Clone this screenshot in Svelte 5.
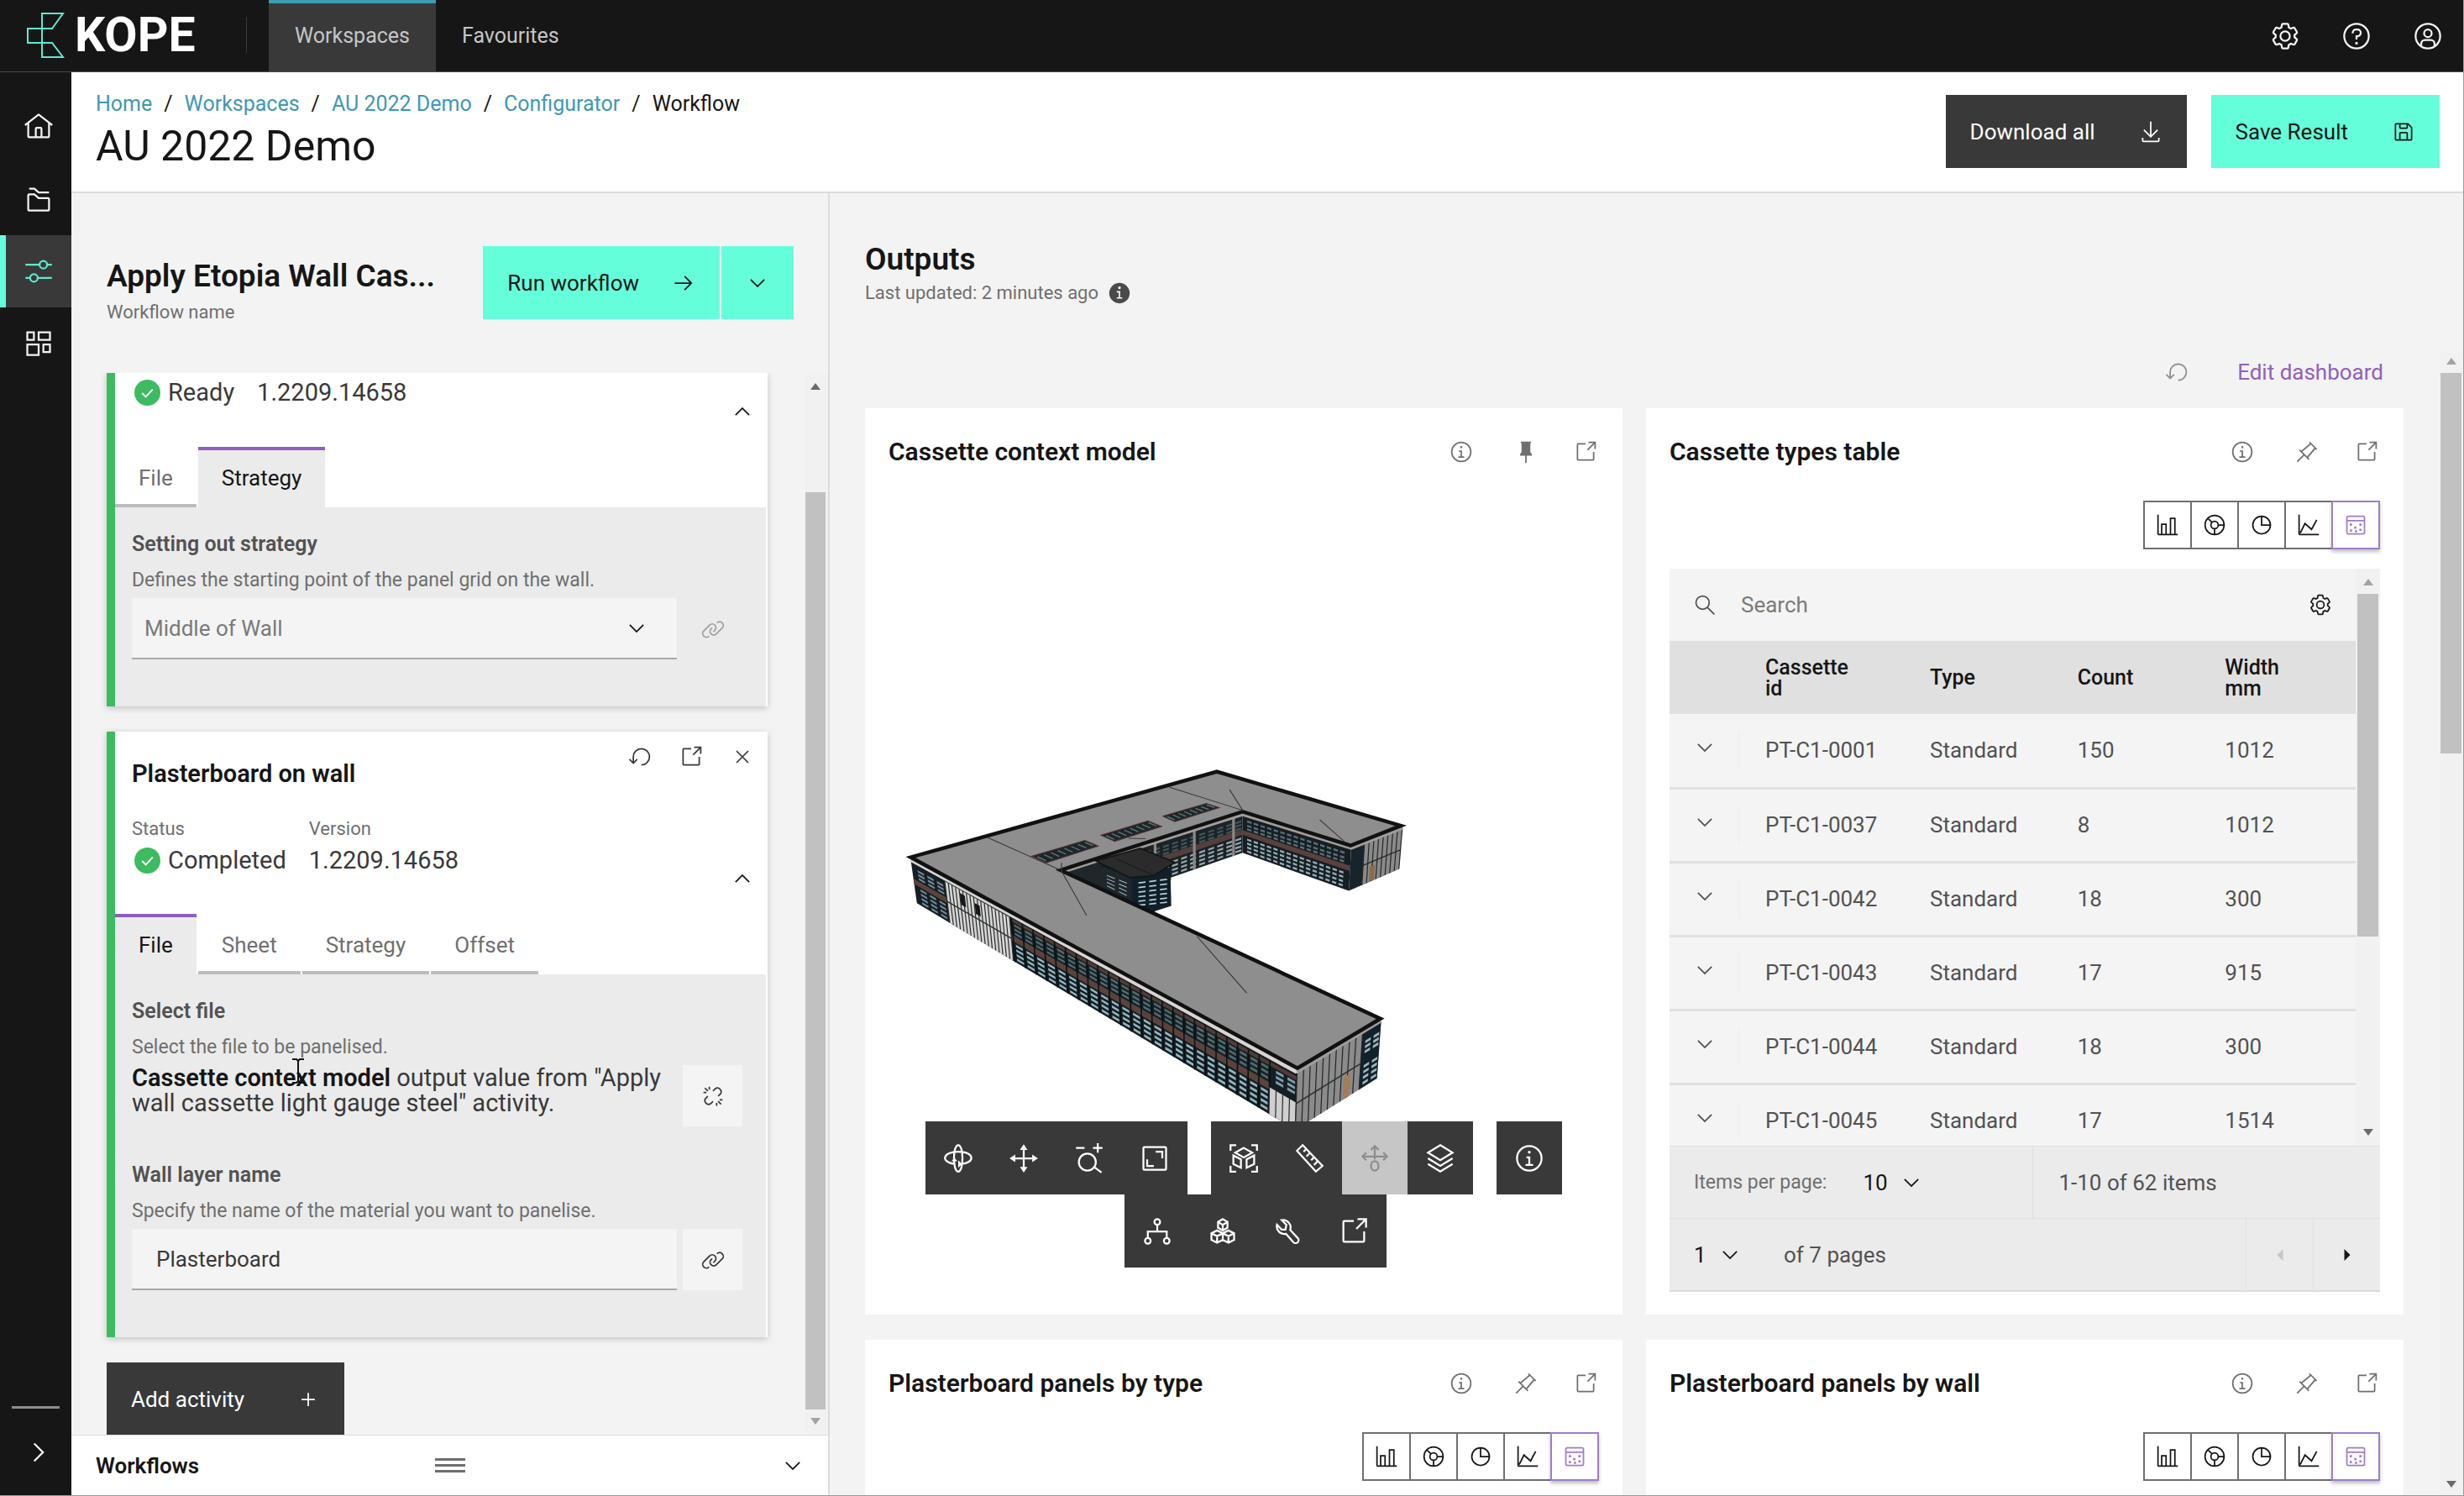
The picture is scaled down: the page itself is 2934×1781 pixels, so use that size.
<script lang="ts">
  type Point = [number, number];

  // 32x32 icon grid: f = filled shape, s = stroked outline
  const icons: Record<string, { f?: string; s?: string }> = {
    home: { f: "M16.6 2.2a1 1 0 0 0-1.2 0L1 13.4 2.2 15 4 13.6V26a2 2 0 0 0 2 2h20a2 2 0 0 0 2-2V13.6L29.8 15 31 13.4ZM18 26h-4v-8h4Zm2 0v-8a2 2 0 0 0-2-2h-4a2 2 0 0 0-2 2v8H6V12l10-7.7L26 12v14Z" },
    folders: { s: "M5 27V12q0-1 1-1h5.500l4.500 4H26q1 0 1 1v11q0 1-1 1H6q-1 0-1-1ZM6 5h5.500l4.500 4h11" },
    flow: { s: "M2 9h15M25 9h5M2 23h5M15 23h15M21 5a4 4 0 1 0 0 8a4 4 0 1 0 0-8M11 19a4 4 0 1 0 0 8a4 4 0 1 0 0-8" },
    board: { s: "M4 4h7v8H4ZM16 4h12v8H16ZM4 17h12v11H4ZM21 17h7v8h-7Z" },
    gear: { f: "M27,16.76c0-.25,0-.5,0-.76s0-.51,0-.77l1.92-1.68A2,2,0,0,0,29.3,11L26.94,7a2,2,0,0,0-1.73-1,2,2,0,0,0-.64.1l-2.43.82a11.35,11.35,0,0,0-1.31-.75l-.51-2.52a2,2,0,0,0-2-1.61H13.64a2,2,0,0,0-2,1.61l-.51,2.52a11.48,11.48,0,0,0-1.32.75L7.43,6.06A2,2,0,0,0,6.79,6,2,2,0,0,0,5.06,7L2.7,11a2,2,0,0,0,.41,2.51L5,15.24c0,.25,0,.5,0,.76s0,.51,0,.77L3.11,18.45A2,2,0,0,0,2.7,21L5.06,25a2,2,0,0,0,1.73,1,2,2,0,0,0,.64-.1l2.43-.82a11.35,11.35,0,0,0,1.31.75l.51,2.52a2,2,0,0,0,2,1.61h4.72a2,2,0,0,0,2-1.61l.51-2.52a11.48,11.48,0,0,0,1.32-.75l2.42.82a2,2,0,0,0,.64.1,2,2,0,0,0,1.73-1L29.3,21a2,2,0,0,0-.41-2.51ZM25.21,24l-3.43-1.16a8.86,8.86,0,0,1-2.71,1.57L18.36,28H13.64l-.71-3.55a9.36,9.36,0,0,1-2.7-1.57L6.79,24,4.43,20l2.72-2.4a8.9,8.9,0,0,1,0-3.13L4.43,12,6.79,8l3.43,1.16a8.86,8.86,0,0,1,2.71-1.57L13.64,4h4.72l.71,3.55a9.36,9.36,0,0,1,2.7,1.57L25.21,8,27.57,12l-2.72,2.4a8.9,8.9,0,0,1,0,3.13L27.57,20ZM16,22a6,6,0,1,1,6-6A5.94,5.94,0,0,1,16,22Zm0-10a3.91,3.91,0,0,0-4,4,3.91,3.91,0,0,0,4,4,3.91,3.91,0,0,0,4-4A3.91,3.91,0,0,0,16,12Z" },
    help: { s: "M16 3a13 13 0 1 0 0 26a13 13 0 1 0 0-26", f: "M17 8h-1.500A4.500 4.500 0 0 0 11 12.500V13h2v-.5a2.500 2.500 0 0 1 2.500-2.500H17a2.500 2.500 0 0 1 0 5h-2v4.500h2V17a4.500 4.500 0 0 0 0-9ZM16 22a1.500 1.500 0 1 0 0 3a1.500 1.500 0 1 0 0-3" },
    user: { s: "M16 3a13 13 0 1 0 0 26a13 13 0 1 0 0-26M16 9a4 4 0 1 0 0 8a4 4 0 1 0 0-8M9 26v-2a4 4 0 0 1 4-4h6a4 4 0 0 1 4 4v2" },
    download: { f: "M26 24v4H6v-4H4v4a2 2 0 0 0 2 2h20a2 2 0 0 0 2-2v-4ZM26 14l-1.400-1.400-7.600 7.600V2h-2v18.200l-7.600-7.600L6 14l10 10Z" },
    save: { f: "M27.700 9.300l-5-5A1 1 0 0 0 22 4H6a2 2 0 0 0-2 2v20a2 2 0 0 0 2 2h20a2 2 0 0 0 2-2V10a1 1 0 0 0-.3-.7ZM12 6h8v4h-8Zm8 20h-8v-8h8Zm2 0v-8a2 2 0 0 0-2-2h-8a2 2 0 0 0-2 2v8H6V6h4v4a2 2 0 0 0 2 2h8a2 2 0 0 0 2-2V6.400l4 4V26Z" },
    arrow: { f: "M18 6l-1.400 1.400 7.600 7.600H4v2h20.200l-7.600 7.600L18 26l10-10Z" },
    down: { f: "M16 22 6 12l1.400-1.400 8.600 8.600 8.600-8.600L26 12Z" },
    up: { f: "M16 10 6 20l1.400 1.400 8.600-8.600 8.600 8.600L26 20Z" },
    right: { f: "M22 16 12 26l-1.400-1.400 8.600-8.600-8.600-8.600L12 6Z" },
    reset: { f: "M18 28A12 12 0 1 0 6 16v6.200l-3.600-3.600L1 20l6 6 6-6-1.400-1.400L8 22.200V16a10 10 0 1 1 10 10Z" },
    launch: { f: "M26 28H6a2 2 0 0 1-2-2V6a2 2 0 0 1 2-2h10v2H6v20h20V16h2v10a2 2 0 0 1-2 2ZM20 2v2h6.600L18 12.600l1.400 1.400L28 5.400V12h2V2Z" },
    close: { s: "M8 8l16 16M24 8 8 24" },
    link: { f: "M29.25,6.76a6,6,0,0,0-8.5,0l1.42,1.42a4,4,0,1,1,5.67,5.67l-8,8a4,4,0,1,1-5.67-5.66l1.41-1.42-1.41-1.42-1.42,1.42a6,6,0,0,0,0,8.5A6,6,0,0,0,17,25a6,6,0,0,0,4.27-1.76l8-8A6,6,0,0,0,29.25,6.76ZM4.19,24.82a4,4,0,0,1,0-5.67l8-8a4,4,0,0,1,5.67,0A3.94,3.94,0,0,1,19,14a4,4,0,0,1-1.17,2.85L15.71,19l1.42,1.42,2.12-2.12a6,6,0,0,0-8.51-8.51l-8,8a6,6,0,0,0,0,8.51A6,6,0,0,0,7,28a6.07,6.07,0,0,0,4.28-1.76L9.86,24.82A4,4,0,0,1,4.19,24.82Z" },
    unlink: { s: "M16 9l3-3a5 5 0 0 1 7 7l-3 3M16 23l-3 3a5 5 0 0 1-7-7l3-3M11 3v4M3 11h4M5 5l4 4M21 29v-4M29 21h-4M27 27l-4-4" },
    plus: { s: "M16 7v18M7 16h18" },
    info: { s: "M16 3a13 13 0 1 0 0 26a13 13 0 1 0 0-26", f: "M17 22v-8h-4v2h2v6h-3v2h8v-2ZM16 8a1.500 1.500 0 1 0 0 3a1.500 1.500 0 1 0 0-3" },
    pin: { f: "M28.600 13.300 30 11.900 20 2l-1.300 1.400 1.200 1.200L8.400 14.300l-1.700-1.700L5.250 14l5.650 5.700L2 28.600 3.400 30l8.900-8.900 5.700 5.650 1.400-1.400-1.700-1.700 9.700-11.500ZM16.260 22.200 9.800 15.740 21.300 6 26 10.700Z" },
    pinned: { f: "M9 2h14v2h-1v12l2 3v2h-7v10h-2V21H8v-2l2-3V4H9Z" },
    bars: { f: "M27 28V6h-8v22h-4V14H7v14H4V2H2v26a2 2 0 0 0 2 2h26v-2ZM13 28H9V16h4Zm12 0h-4V8h4Z" },
    donut: { s: "M16 3a13 13 0 1 0 0 26a13 13 0 1 0 0-26M16 11a5 5 0 1 0 0 10a5 5 0 1 0 0-10M12.500 12.500 7 7M21 16h8M16 21v8" },
    pie: { s: "M16 4a12 12 0 1 0 0 24a12 12 0 1 0 0-24M16 4v12h12" },
    line: { s: "M3 2v26q0 1 1 1h26M4.500 27 11 14l9 8L27 9" },
    grid: { s: "M6 4h20q2 0 2 2v20q0 2-2 2H6q-2 0-2-2V6q0-2 2-2ZM4 10h24", f: "M8 14h3v3H8ZM21 14h3v3h-3ZM14 18h3v3h-3ZM8 22h3v3H8ZM15 23h3v3h-3ZM21 21h3v3h-3Z" },
    search: { s: "M13 4a9 9 0 1 0 0 18a9 9 0 1 0 0-18M19.500 19.500 29 29" },
    orbit: { s: "M16 2c6 0 6 28 0 28S10 2 16 2M16 9c18 0 18 12 3 13M13 22C-4 20 0 9 16 9", f: "M12 15l-3 4h6ZM20 22l-4-4v8Z" },
    pan: { s: "M16 4v24M4 16h24", f: "M16 1l4 6h-8ZM16 31l4-6h-8ZM1 16l6-4v8ZM31 16l-6-4v8Z" },
    zoom: { s: "M14 11a9 9 0 1 0 0 18a9 9 0 1 0 0-18M21 25l8 6M2 5h9M20 5h10M25 0v10" },
    fit: { s: "M5 4h22q1 0 1 1v22q0 1-1 1H5q-1 0-1-1V5q0-1 1-1ZM17 9h7v7M15 24H8v-7" },
    explode: { s: "M2 8V2h6M24 2h6v6M30 24v6h-6M8 30H2v-6M16 5l9 5-9 5-9-5ZM5 13l8 4v9l-8-4ZM27 13l-8 4v9l8-4Z" },
    ruler: { s: "M9 2 30 24l-7 6L3 8ZM13 6l-3 3M17 10l-4 4M21 15l-3 3M25 19l-4 4" },
    move: { s: "M16 3v14M3 14h26M12 7l4-4 4 4M7 10l-4 4 4 4M25 10l4 4-4 4M16 19a4 5 0 1 0 0 10a4 5 0 1 0 0-10" },
    layers: { s: "M16 2l13 8-13 8L3 10ZM3 16l13 8 13-8M3 22l13 8 13-8" },
    tree: { s: "M16 3a3 3 0 1 0 0 6a3 3 0 1 0 0-6M16 9v7M6 23v-7h20v7M6 23a3 3 0 1 0 0 6a3 3 0 1 0 0-6M26 23a3 3 0 1 0 0 6a3 3 0 1 0 0-6" },
    blocks: { s: "M16 3l5 3v6l-5 3-5-3V6ZM11 6l5 3 5-3M16 9v6M10 15l6 3v7l-6 3-6-3v-7ZM4 18l6 3 6-3M10 21v7M22 15l6 3v7l-6 3-6-3v-7ZM16 18l6 3 6-3M22 21v7" },
    wrench: { s: "M9 4l5 5-1 5H9L4 9a8 8 0 0 0 9.500 9.500l8 9a3 3 0 0 0 4.500-4.500l-8-8.500A8 8 0 0 0 9 4Z" },
    caretLeft: { f: "M20 8v16l-8-8Z" },
    caretRight: { f: "M12 8v16l8-8Z" },
  };

  const crumbs = ["Home", "Workspaces", "AU 2022 Demo", "Configurator"];
  const sideItems = [
    { icon: "home", label: "Home" },
    { icon: "folders", label: "Projects" },
    { icon: "flow", label: "Configurator", active: true },
    { icon: "board", label: "Dashboards" },
  ];
  const rows = [
    ["PT-C1-0001", "Standard", "150", "1012"],
    ["PT-C1-0037", "Standard", "8", "1012"],
    ["PT-C1-0042", "Standard", "18", "300"],
    ["PT-C1-0043", "Standard", "17", "915"],
    ["PT-C1-0044", "Standard", "18", "300"],
    ["PT-C1-0045", "Standard", "17", "1514"],
  ];
  const charts = ["bars", "donut", "pie", "line", "grid"];
  const tools = [
    ["orbit", "pan", "zoom", "fit"],
    ["explode", "ruler", "move", "layers"],
    ["info"],
    ["tree", "blocks", "wrench", "launch"],
  ];

  let layerName = $state("Plasterboard");
  let search = $state("");
  let chart = $state("grid");

  // walls are quads: top-left, top-right, bottom-right, bottom-left
  function at(q: Point[], u: number, v: number): Point {
    const mix = (a: Point, b: Point, t: number): Point => [a[0] + (b[0] - a[0]) * t, a[1] + (b[1] - a[1]) * t];
    return mix(mix(q[0], q[1], u), mix(q[3], q[2], u), v);
  }
  function cell(q: Point[], u0: number, v0: number, u1: number, v1: number) {
    const pts = [at(q, u0, v0), at(q, u1, v0), at(q, u1, v1), at(q, u0, v1)];
    return "M" + pts.map((p) => p.map((n) => n.toFixed(1)).join(" ")).join("L") + "Z";
  }
  function panes(q: Point[], cols: number, from: number, to: number, levels: number[]) {
    let d = "";
    const w = (to - from) / cols;
    for (let c = 0; c < cols; c++) {
      for (const v of levels) d += cell(q, from + w * (c + 0.2), v, from + w * (c + 0.86), v + 0.05);
    }
    return d;
  }
  function ribs(q: Point[], count: number, from: number, to: number, v0 = 0, v1 = 1) {
    let d = "";
    for (let i = 0; i <= count; i++) {
      const u = from + ((to - from) * i) / count;
      d += "M" + at(q, u, v0).join(" ") + "L" + at(q, u, v1).join(" ");
    }
    return d;
  }

  const front: Point[] = [[60, 402], [1187, 1164], [1182, 1366], [78, 556]];
  const end: Point[] = [[1187, 1164], [1432, 982], [1420, 1182], [1182, 1366]];
  const farEnd: Point[] = [[1345, 358], [1494, 286], [1484, 434], [1338, 512]];
  const innerRight: Point[] = [[1028, 236], [1345, 358], [1338, 512], [1028, 376]];
  const innerBack: Point[] = [[500, 445], [1028, 236], [1028, 376], [500, 600]];
  const upper = [0.16, 0.25, 0.34];
  const lower = [0.6, 0.7, 0.8, 0.9];
  const skylights: Point[][] = [
    [[413, 388], [568, 332], [607, 352], [455, 412]],
    [[615, 313], [752, 262], [792, 282], [655, 335]],
    [[795, 245], [922, 200], [960, 215], [830, 265]],
  ];
</script>

{#snippet icon(name: string, size = "md")}
  <svg class="icon {size}" viewBox="0 0 32 32" aria-hidden="true">
    {#if icons[name].s}<path class="stroke" d={icons[name].s} />{/if}
    {#if icons[name].f}<path class="fill" d={icons[name].f} />{/if}
  </svg>
{/snippet}

{#snippet check()}
  <svg class="check" viewBox="0 0 32 32" aria-hidden="true">
    <circle cx="16" cy="16" r="16" fill="#3dbb61" />
    <path d="M9.500 16.500l4.500 4.500 8.500-9" fill="none" stroke="#fff" stroke-width="2" />
  </svg>
{/snippet}

{#snippet scrollbar(kind: string)}
  <div class="scrollbar {kind}" aria-hidden="true">
    <i class="tri-up"></i>
    <span class="track"><b></b></span>
    <i class="tri-down"></i>
  </div>
{/snippet}

{#snippet tileHead(title: string, pinIcon: string)}
  <header class="tile-head">
    <h3>{title}</h3>
    <button type="button" aria-label="Information">{@render icon("info")}</button>
    <button type="button" aria-label="Pin">{@render icon(pinIcon)}</button>
    <button type="button" aria-label="Open in new window">{@render icon("launch")}</button>
  </header>
{/snippet}

{#snippet chartSwitch()}
  <div class="switch">
    {#each charts as name}
      <button type="button" class:on={chart === name} aria-label={name} onclick={() => (chart = name)}>
        {@render icon(name)}
      </button>
    {/each}
  </div>
{/snippet}

<div class="shell">
  <header class="topbar">
    <a class="brand" href="#home">
      <svg viewBox="0 0 46 56" aria-hidden="true">
        <path d="M19 2h25L31 20H2v17h29l13 17H19Z" />
      </svg>
      <span>KOPE</span>
    </a>
    <nav>
      <a class="current" href="#workspaces">Workspaces</a>
      <a href="#favourites">Favourites</a>
    </nav>
    <div class="account">
      <button type="button" aria-label="Settings">{@render icon("gear", "lg")}</button>
      <button type="button" aria-label="Help">{@render icon("help", "lg")}</button>
      <button type="button" aria-label="Account">{@render icon("user", "lg")}</button>
    </div>
  </header>

  <div class="body">
    <aside class="side">
      {#each sideItems as item}
        <a href="#{item.icon}" class:active={item.active} aria-label={item.label}>{@render icon(item.icon, "lg")}</a>
      {/each}
      <button type="button" class="expand" aria-label="Expand menu">{@render icon("right", "lg")}</button>
    </aside>

    <main>
      <header class="page-head">
        <div>
          <nav class="crumbs">
            {#each crumbs as crumb}
              <a href="#{crumb}">{crumb}</a><span>/</span>
            {/each}
            <span>Workflow</span>
          </nav>
          <h1>AU 2022 Demo</h1>
        </div>
        <div class="actions">
          <button type="button" class="btn dark">Download all {@render icon("download")}</button>
          <button type="button" class="btn teal">Save Result {@render icon("save")}</button>
        </div>
      </header>

      <div class="columns">
        <section class="workflow">
          <div class="workflow-head">
            <div class="name">
              <h2>Apply Etopia Wall Cas...</h2>
              <p class="helper small">Workflow name</p>
            </div>
            <div class="run">
              <button type="button" class="btn teal">Run workflow {@render icon("arrow")}</button>
              <button type="button" class="btn teal more" aria-label="More run options">{@render icon("down")}</button>
            </div>
          </div>

          <div class="scroll">
            <div class="activities">
              <article class="activity">
                <div class="summary short">
                  <div class="value">{@render check()} Ready</div>
                  <div class="value">1.2209.14658</div>
                  <button type="button" class="fold" aria-label="Collapse">{@render icon("up")}</button>
                </div>
                <div class="tabs">
                  <button type="button">File</button>
                  <button type="button" class="on">Strategy</button>
                </div>
                <div class="fields">
                  <div class="field">
                    <label for="strategy">Setting out strategy</label>
                    <p class="helper">Defines the starting point of the panel grid on the wall.</p>
                    <div class="control">
                      <div class="select">
                        <select id="strategy" disabled><option>Middle of Wall</option></select>
                        {@render icon("down")}
                      </div>
                      <button type="button" class="link off" disabled aria-label="Link value">{@render icon("link")}</button>
                    </div>
                  </div>
                </div>
              </article>

              <article class="activity">
                <div class="activity-head">
                  <h3>Plasterboard on wall</h3>
                  <div class="activity-tools">
                    <button type="button" aria-label="Reset">{@render icon("reset")}</button>
                    <button type="button" aria-label="Open">{@render icon("launch")}</button>
                    <button type="button" aria-label="Remove">{@render icon("close")}</button>
                  </div>
                </div>
                <div class="summary">
                  <div>
                    <p class="helper small">Status</p>
                    <div class="value">{@render check()} Completed</div>
                  </div>
                  <div>
                    <p class="helper small">Version</p>
                    <div class="value">1.2209.14658</div>
                  </div>
                  <button type="button" class="fold" aria-label="Collapse">{@render icon("up")}</button>
                </div>
                <div class="tabs">
                  <button type="button" class="on">File</button>
                  <button type="button">Sheet</button>
                  <button type="button">Strategy</button>
                  <button type="button">Offset</button>
                </div>
                <div class="fields">
                  <div class="field">
                    <h4>Select file</h4>
                    <p class="helper">Select the file to be panelised.</p>
                    <div class="control">
                      <p class="source">
                        <strong>Cassette context model</strong> output value from "Apply wall cassette light gauge steel" activity.
                        <svg class="caret" viewBox="0 0 20 30" aria-hidden="true"><path d="M3 1h5l2 2 2-2h5M10 3v24M3 29h5l2-2 2 2h5" /></svg>
                      </p>
                      <button type="button" class="link" aria-label="Unlink value">{@render icon("unlink")}</button>
                    </div>
                  </div>
                  <div class="field">
                    <label for="layer">Wall layer name</label>
                    <p class="helper">Specify the name of the material you want to panelise.</p>
                    <div class="control">
                      <input id="layer" type="text" bind:value={layerName} />
                      <button type="button" class="link" aria-label="Link value">{@render icon("link")}</button>
                    </div>
                  </div>
                </div>
              </article>

              <button type="button" class="btn dark add">Add activity {@render icon("plus")}</button>
            </div>
            {@render scrollbar("left")}
          </div>

          <footer class="drawer">
            <h3>Workflows</h3>
            <span class="grip"></span>
            <button type="button" aria-label="Toggle workflows">{@render icon("down")}</button>
          </footer>
        </section>

        <section class="outputs">
          <div class="outputs-head">
            <h2>Outputs</h2>
            <p class="helper small">
              Last updated: 2 minutes ago
              <svg class="dot" viewBox="0 0 32 32" aria-hidden="true">
                <circle cx="16" cy="16" r="15" />
                <path d="M17 22v-9h-5v2h3v7h-3v2h8v-2ZM16 6a2 2 0 1 0 0 4a2 2 0 1 0 0-4" />
              </svg>
            </p>
          </div>

          <div class="scroll">
            <div class="dashboard">
              <div class="edit">
                <button type="button" aria-label="Refresh">{@render icon("reset")}</button>
                <a href="#edit">Edit dashboard</a>
              </div>

              <article class="tile">
                {@render tileHead("Cassette context model", "pinned")}
                <div class="viewer">
                  <svg class="model" viewBox="0 0 1568 1336" preserveAspectRatio="none" role="img" aria-label="Cassette context model">
                    <path d={cell(innerBack, 0, 0, 1, 1)} fill="#1c2226" />
                    <path d={cell(innerBack, 0.3, 0.4, 1, 0.54)} fill="#53403a" />
                    <path d={panes(innerBack, 18, 0.1, 1, upper)} fill="#3f5559" />
                    <path d={panes(innerBack, 18, 0.1, 1, lower)} fill="#93a8ae" />
                    <path d={ribs(innerBack, 3, 0.3, 0.95)} stroke="#8d8685" stroke-width="8" />
                    <path d={cell(innerRight, 0, 0, 1, 1)} fill="#171e23" />
                    <path d={cell(innerRight, 0, 0.42, 1, 0.54)} fill="#5a423b" />
                    <path d={panes(innerRight, 15, 0.03, 0.95, [0.14, 0.25, 0.34])} fill="#587277" />
                    <path d={panes(innerRight, 15, 0.03, 0.95, lower)} fill="#93adb4" />
                    <path d={cell(farEnd, 0, 0, 1, 1)} fill="#17242b" />
                    <path d={cell(farEnd, 0.26, 0, 1, 1)} fill="#8a8a8a" />
                    <path d={ribs(farEnd, 8, 0.26, 1)} stroke="#26282a" stroke-width="3" />
                    <path d={cell(farEnd, 0.26, 0.52, 1, 0.55)} fill="#26282a" />
                    <path d={cell(farEnd, 0.4, 0.64, 0.5, 1)} fill="#8b6b4d" />
                    <path d="M500 440 770 590 820 470 740 360Z" fill="#20272b" />
                    <path d="M608 420 705 465 705 550 768 586 820 566 817 430Z" fill="#10202a" />
                    <path d={panes([[625, 440], [695, 470], [695, 545], [625, 500]], 2, 0, 1, [0.2, 0.4, 0.6, 0.8])} fill="#9fb8c2" />
                    <path d={panes([[718, 470], [812, 455], [812, 560], [718, 572]], 3, 0, 1, [0.12, 0.28, 0.44, 0.6, 0.76, 0.9])} fill="#b9cdd5" />

                    <path d={cell(front, 0, 0, 1, 1)} fill="#141e24" />
                    <path d={cell(front, 0.26, 0.06, 1, 0.13)} fill="#523c36" />
                    <path d={cell(front, 0, 0.43, 0.93, 0.56)} fill="#5b433b" />
                    <path d={panes(front, 3, 0.01, 0.085, [...upper, ...lower])} fill="#6f8b96" />
                    <path d={panes(front, 24, 0.26, 0.93, upper)} fill="#4f6b6d" />
                    <path d={panes(front, 24, 0.26, 0.93, lower)} fill="#93b5bf" />
                    <path d={panes(front, 2, 0.94, 1, upper)} fill="#7f9ba5" />
                    <path d={ribs(front, 24, 0.26, 0.93)} stroke="#0d1114" stroke-width="4" />
                    <path d={cell(front, 0.087, 0.06, 0.255, 1)} fill="#d5d5d3" />
                    <path d={ribs(front, 18, 0.087, 0.255, 0.06)} stroke="#2a2c2e" stroke-width="3" />
                    <path d={cell(front, 0.087, 0.5, 0.255, 0.53)} fill="#2f3234" />
                    <path d={cell(front, 0.125, 0.14, 0.138, 0.4) + cell(front, 0.163, 0.18, 0.176, 0.42)} fill="#15191c" />
                    <path d={cell(front, 0.93, 0.52, 1, 1)} fill="#cfcfcf" />
                    <path d={ribs(front, 4, 0.93, 1, 0.52)} stroke="#2a2c2e" stroke-width="3" />

                    <path d={cell(end, 0, 0, 1, 1)} fill="#8b8b8b" />
                    <path d={cell(end, 0.78, 0, 1, 1)} fill="#12222b" />
                    <path d={panes(end, 2, 0.8, 1, [...upper, ...lower])} fill="#9db6c0" />
                    <path d={ribs(end, 10, 0, 0.78)} stroke="#242628" stroke-width="3" />
                    <path d={cell(end, 0, 0.52, 0.78, 0.55)} fill="#303335" />
                    <path d={cell(end, 0.58, 0.6, 0.66, 1)} fill="#a37d58" />

                    <path d="M60 400 1187 1160" stroke="#d8d4d2" stroke-width="14" />
                    <path d="M1187 1160 1432 978M500 446 1028 240 1345 360 1494 288" fill="none" stroke="#a09d9b" stroke-width="10" />
                    <path
                      d="M953 86 1490 279 1343 350 1028 229 497 438 1430 969 1188 1146 60 392Z"
                      fill="#8e8e8e"
                      stroke="#111"
                      stroke-width="13"
                    />
                    <path d="M600 405 730 360 830 410 768 458 700 465Z" fill="#2b2b2b" stroke="#141414" stroke-width="5" />
                    <path d="M660 398 768 456" stroke="#111" stroke-width="2" />
                    <path d="M285 322 495 437M815 142 1028 224 990 150M1253 258l76 82M500 412v30l73 158M695 324l50 2M895 675l145 202" fill="none" stroke="#3a3a3a" stroke-width="3" />
                    {#each skylights as sky}
                      <path d={cell(sky, 0, 0, 1, 1)} fill="#1d2629" stroke="#5a2f35" stroke-width="3" />
                      <path d={ribs(sky, 7, 0.05, 0.95, 0.2, 0.8)} stroke="#5c777b" stroke-width="4" />
                    {/each}
                  </svg>
                  <div class="toolbar">
                    {#each tools as group}
                      <div class="group">
                        {#each group as tool}
                          <button type="button" aria-label={tool} disabled={tool === "move"}>{@render icon(tool, "lg")}</button>
                        {/each}
                      </div>
                    {/each}
                  </div>
                </div>
              </article>

              <article class="tile">
                {@render tileHead("Cassette types table", "pin")}
                {@render chartSwitch()}
                <div class="table-box">
                  <div class="table-view">
                    <div class="table-main">
                      <div class="search">
                        {@render icon("search")}
                        <input type="search" placeholder="Search" aria-label="Search" bind:value={search} />
                        <button type="button" aria-label="Table settings">{@render icon("gear")}</button>
                      </div>
                      <table>
                        <thead>
                          <tr>
                            <th class="tick" aria-label="Expand"></th>
                            <th class="id">Cassette<br />id</th>
                            <th>Type</th>
                            <th>Count</th>
                            <th>Width<br />mm</th>
                          </tr>
                        </thead>
                        <tbody>
                          {#each rows as row}
                            <tr>
                              <td class="tick"><button type="button" aria-label="Expand row">{@render icon("down")}</button></td>
                              {#each row as value}<td>{value}</td>{/each}
                            </tr>
                          {/each}
                        </tbody>
                      </table>
                    </div>
                    {@render scrollbar("inner")}
                  </div>
                  <div class="pager">
                    <div class="pager-row">
                      <label class="helper" for="per-page">Items per page:</label>
                      <span class="pick"><select id="per-page"><option>10</option></select>{@render icon("down")}</span>
                      <span class="range">1-10 of 62 items</span>
                    </div>
                    <div class="pager-row">
                      <span class="pick page"><select aria-label="Page"><option>1</option></select>{@render icon("down")}</span>
                      <span class="pages">of 7 pages</span>
                      <button type="button" disabled aria-label="Previous page">{@render icon("caretLeft")}</button>
                      <button type="button" aria-label="Next page">{@render icon("caretRight")}</button>
                    </div>
                  </div>
                </div>
              </article>

              <article class="tile">
                {@render tileHead("Plasterboard panels by type", "pin")}
                {@render chartSwitch()}
              </article>
              <article class="tile">
                {@render tileHead("Plasterboard panels by wall", "pin")}
                {@render chartSwitch()}
              </article>
            </div>
            {@render scrollbar("right")}
          </div>
        </section>
      </div>
    </main>
  </div>
</div>

<style>
  :global(body) {
    margin: 0;
    background: #f4f4f4;
  }
  .shell {
    height: 100vh;
    display: flex;
    flex-direction: column;
    box-sizing: border-box;
    border-right: 1px solid #9a9a9a;
    border-bottom: 1px solid #9a9a9a;
    overflow: hidden;
    background: #f3f3f3;
    color: #161616;
    font-family: Roboto, "Liberation Sans", sans-serif;
    font-size: 26px;
    line-height: 32px;
  }
  .shell :global(*) {
    box-sizing: border-box;
  }
  h1, h2, h3, h4, p {
    margin: 0;
  }
  h2 {
    font-size: 37px;
    font-weight: 600;
    line-height: 46px;
  }
  h3 {
    font-size: 30px;
    font-weight: 600;
    line-height: 36px;
  }
  h4, .field label {
    display: block;
    color: #525252;
    font-size: 25px;
    font-weight: 600;
    line-height: 32px;
  }
  a {
    color: inherit;
    text-decoration: none;
  }
  button, input, select {
    margin: 0;
    padding: 0;
    border: 0;
    border-radius: 0;
    background: none;
    color: inherit;
    font: inherit;
    appearance: none;
  }
  button {
    display: flex;
    align-items: center;
    justify-content: center;
  }
  select:disabled {
    opacity: 1;
  }
  .helper {
    color: #6f6f6f;
    font-size: 23px;
    line-height: 30px;
  }
  .helper.small {
    font-size: 22px;
  }
  .icon {
    display: block;
    flex: none;
    width: 28px;
    height: 28px;
  }
  .icon.lg {
    width: 36px;
    height: 36px;
  }
  .stroke {
    fill: none;
    stroke: currentColor;
    stroke-width: 2;
  }
  .fill {
    fill: currentColor;
  }

  .topbar {
    flex: none;
    height: 86px;
    display: flex;
    align-items: stretch;
    background: #161616;
    border-bottom: 1px solid #4a4a4a;
    color: #c6c6c6;
  }
  .brand {
    width: 294px;
    margin: 20px 26px 22px 0;
    padding-left: 31px;
    display: flex;
    align-items: center;
    gap: 12px;
    border-right: 1px solid #393939;
    color: #fff;
    font-size: 57px;
    font-weight: 700;
    line-height: 44px;
  }
  .brand svg {
    flex: none;
    width: 46px;
    height: 56px;
    fill: none;
    stroke: #5eead0;
    stroke-width: 2;
  }
  .topbar nav {
    display: flex;
    font-size: 25px;
  }
  .topbar nav a {
    display: flex;
    align-items: center;
    padding: 0 31px;
    border-top: 4px solid transparent;
    border-bottom: 4px solid transparent;
  }
  .topbar nav .current {
    border-top-color: #3f9ab4;
    background-color: #393939;
  }
  .account {
    margin-left: auto;
    padding-right: 24px;
    display: flex;
    align-items: center;
    gap: 49px;
    color: #f4f4f4;
  }

  .body {
    flex: 1;
    min-height: 0;
    display: flex;
  }
  .side {
    flex: none;
    width: 85px;
    padding-top: 22px;
    display: flex;
    flex-direction: column;
    background: #161616;
    color: #f4f4f4;
  }
  .side a {
    height: 86px;
    display: flex;
    align-items: center;
    justify-content: center;
    border-left: 7px solid transparent;
  }
  .side .active {
    border-left-color: #64ffda;
    background: #393939;
    color: #5eead0;
  }
  .expand {
    height: 106px;
    margin: auto 14px 0;
    padding-left: 7px;
    border-top: 3px solid #8d8d8d;
  }

  main {
    flex: 1;
    min-width: 0;
    display: flex;
    flex-direction: column;
  }
  .page-head {
    flex: none;
    height: 144px;
    padding: 22px 28px 0 29px;
    display: flex;
    justify-content: space-between;
    background: #fff;
    border-bottom: 2px solid #dcdcdc;
  }
  .crumbs {
    display: flex;
    gap: 14px;
    font-size: 25px;
  }
  .crumbs a {
    color: #3f98b0;
  }
  h1 {
    margin-top: 4px;
    font-size: 50px;
    font-weight: 400;
    line-height: 60px;
  }
  .actions {
    display: flex;
    gap: 29px;
    padding-top: 5px;
  }
  .btn {
    height: 87px;
    padding: 0 29px;
    justify-content: space-between;
    gap: 52px;
    white-space: nowrap;
  }
  .dark {
    background: #393939;
    color: #fff;
  }
  .teal {
    background: #64ffda;
    color: #161616;
  }

  .columns {
    flex: 1;
    min-height: 0;
    display: grid;
    grid-template-columns: 903fr 1945fr;
  }
  .workflow, .outputs {
    min-width: 0;
    min-height: 0;
    display: flex;
    flex-direction: column;
  }
  .workflow {
    border-right: 2px solid #dcdcdc;
  }
  .workflow-head {
    flex: none;
    display: flex;
    justify-content: space-between;
    padding: 63px 41px 0 42px;
    height: 214px;
  }
  .name {
    padding-top: 13px;
  }
  .name .helper {
    margin-top: 5px;
  }
  .run {
    display: flex;
    gap: 2px;
  }
  .run .btn {
    gap: 39px;
  }
  .run .more {
    padding: 0 29px;
  }
  .scroll {
    flex: 1;
    min-height: 0;
    display: flex;
    overflow: hidden;
  }
  .activities {
    flex: 1;
    min-width: 0;
    margin: 0 45px 0 42px;
    display: flex;
    flex-direction: column;
    gap: 30px;
  }
  .activity {
    flex: none;
    border-left: 10px solid #3dbb61;
    border-right: 2px solid #fff;
    background: #fff;
    box-shadow: 0 2px 8px rgba(0, 0, 0, .2);
  }
  .activity-head {
    display: flex;
    justify-content: space-between;
    padding: 16px 14px 0 20px;
    height: 101px;
  }
  .activity-head h3 {
    padding-top: 16px;
    font-size: 29px;
  }
  .activity-tools {
    display: flex;
    align-items: flex-start;
    gap: 33px;
    color: #393939;
  }
  .summary {
    display: flex;
    gap: 27px;
    height: 116px;
    padding: 0 14px 0 20px;
  }
  .summary.short {
    height: 88px;
    padding-top: 5px;
  }
  .value {
    display: flex;
    align-items: center;
    gap: 9px;
    height: 36px;
    color: #393939;
    font-size: 29px;
    line-height: 36px;
  }
  .summary .helper + .value {
    margin-top: 4px;
  }
  .check {
    width: 31px;
    height: 31px;
    margin-left: 3px;
  }
  .fold {
    align-self: flex-end;
    margin-left: auto;
    margin-bottom: 28px;
  }
  .tabs {
    display: flex;
    gap: 2px;
  }
  .tabs button {
    height: 72px;
    padding: 2px 28px 0;
    border-top: 4px solid transparent;
    border-bottom: 4px solid #bdbdbd;
    color: #6f6f6f;
  }
  .tabs .on {
    border-color: #8f5fbf transparent #ebebeb;
    background: #ebebeb;
    color: #161616;
  }
  .fields {
    padding: 28px 28px 56px 20px;
    display: flex;
    flex-direction: column;
    gap: 42px;
    background: #ebebeb;
  }
  .field .helper {
    margin: 12px 0 6px;
  }
  .control {
    display: flex;
    gap: 7px;
  }
  .select, .control input {
    flex: 1;
    min-width: 0;
    height: 73px;
    border-bottom: 2px solid #a8a8a8;
    background: #f4f4f4;
  }
  .select {
    display: flex;
    align-items: center;
    padding-right: 34px;
  }
  .select select {
    flex: 1;
    padding-left: 15px;
    color: #7a7a7a;
  }
  .control input {
    padding: 0 29px;
    color: #393939;
  }
  .link {
    width: 71px;
    height: 73px;
    background: #f4f4f4;
    color: #393939;
  }
  .link.off {
    background: none;
    color: #a0a0a0;
  }
  .source {
    position: relative;
    flex: 1;
    color: #393939;
    font-size: 29px;
    line-height: 30px;
  }
  .source strong {
    color: #161616;
    font-weight: 600;
  }
  .caret {
    position: absolute;
    top: -8px;
    left: 188px;
    width: 20px;
    height: 30px;
    fill: none;
    stroke: #111;
    stroke-width: 2;
  }
  .add {
    flex: none;
    align-self: flex-start;
    gap: 62px;
  }
  .drawer {
    flex: none;
    height: 72px;
    padding: 0 28px 0 29px;
    display: grid;
    grid-template-columns: 1fr 36px 1fr;
    align-items: center;
    border-top: 1px solid #dcdcdc;
    background: #fff;
  }
  .drawer h3 {
    font-size: 26px;
  }
  .drawer button {
    justify-self: end;
  }
  .grip {
    height: 17px;
    border: solid #6f6f6f;
    border-width: 3px 0;
    background: linear-gradient(#6f6f6f, #6f6f6f) center / 100% 3px no-repeat;
  }

  .scrollbar {
    flex: none;
    width: 27px;
    display: flex;
    flex-direction: column;
    align-items: center;
    padding: 12px 3px 12px 0;
    background: #f1f1f1;
  }
  .scrollbar i {
    border: 6px solid transparent;
  }
  .tri-up {
    border-top-width: 0 !important;
    border-bottom: 8px solid #6a6a6a !important;
  }
  .tri-down {
    border-bottom-width: 0 !important;
    border-top: 8px solid #6a6a6a !important;
  }
  .track {
    flex: 1;
    align-self: stretch;
    display: flex;
    flex-direction: column;
    padding: 10px 0;
  }
  .track b {
    background: #c1c1c1;
  }
  .left .track b {
    margin-top: auto;
    height: calc(90% + 4px);
  }
  .left .track {
    padding-top: 5px;
  }
  .left .tri-down {
    border-top-color: #a3a3a3 !important;
  }
  .inner .tri-up, .right .tri-up {
    border-bottom-color: #a3a3a3 !important;
  }
  .right {
    padding: 6px 2px 9px 0;
  }
  .right .track b {
    height: calc(34% + 8px);
  }
  .inner {
    width: 29px;
    padding-right: 2px;
    padding-left: 2px;
  }
  .inner .track b {
    height: 65%;
  }

  .outputs-head {
    flex: none;
    height: 190px;
    padding: 56px 42px 0;
  }
  .outputs-head .helper {
    display: flex;
    align-items: center;
    gap: 12px;
    margin-top: 2px;
  }
  .dot {
    width: 26px;
    height: 26px;
    fill: #4a4a4a;
  }
  .dot path {
    fill: #fff;
  }
  .dashboard {
    flex: 1;
    min-width: 0;
    margin: 0 44px 0 42px;
    display: grid;
    grid-template-columns: 1fr 1fr;
    grid-template-rows: 36px;
    grid-auto-rows: 1079px;
    column-gap: 28px;
    row-gap: 30px;
  }
  .edit {
    grid-column: 1 / -1;
    padding: 10px 24px 0 0;
    display: flex;
    align-items: center;
    justify-content: flex-end;
    gap: 58px;
    color: #8d8d8d;
  }
  .edit a {
    color: #9260bd;
  }
  .tile {
    min-width: 0;
    padding: 34px 28px 27px;
    display: flex;
    flex-direction: column;
    background: #fff;
  }
  .tile-head {
    flex: none;
    display: flex;
    align-items: center;
    height: 36px;
    padding-right: 2px;
    color: #6f6f6f;
  }
  .tile-head h3 {
    margin-right: auto;
    color: #161616;
  }
  .tile-head button {
    margin-left: 49px;
  }
  .tile-head button:last-child {
    margin-left: 43px;
  }
  .switch {
    flex: none;
    align-self: flex-end;
    display: flex;
    margin-top: 40px;
    margin-bottom: 23px;
  }
  .switch button {
    width: 58px;
    height: 58px;
    margin-left: -2px;
    border: 2px solid #6f6f6f;
  }
  .switch .on {
    border-color: #a07cc9;
    color: #a07cc9;
    box-shadow: 0 3px 4px rgba(0, 0, 0, .25);
  }

  .viewer {
    flex: 1;
    display: flex;
    flex-direction: column;
    align-items: center;
    justify-content: flex-end;
    padding-bottom: 29px;
  }
  .model {
    width: 640px;
    height: 445px;
    margin-right: 202px;
  }
  .toolbar {
    max-width: 800px;
    display: flex;
    flex-wrap: wrap;
    justify-content: center;
  }
  .group {
    display: flex;
  }
  .group + .group {
    margin-left: 28px;
  }
  .group button {
    width: 78px;
    height: 87px;
    background: #393939;
    color: #fff;
  }
  .group button:disabled {
    background: #c6c6c6;
    color: #8d8d8d;
  }

  .table-box {
    flex: 1;
    min-height: 0;
    display: flex;
    flex-direction: column;
    color: #525252;
  }
  .table-view {
    flex: 1;
    min-height: 0;
    display: flex;
    overflow: hidden;
    background: #f4f4f4;
  }
  .table-main {
    flex: 1;
    min-width: 0;
  }
  .search {
    height: 86px;
    padding: 0 28px;
    display: flex;
    align-items: center;
    gap: 29px;
  }
  .search input {
    flex: 1;
    min-width: 0;
  }
  .search input::placeholder {
    color: #7a7a7a;
    opacity: 1;
  }
  .search button {
    color: #161616;
  }
  table {
    width: 100%;
    border-collapse: collapse;
    table-layout: fixed;
  }
  th, td {
    height: 88px;
    padding: 0 0 0 20px;
    text-align: left;
  }
  th {
    height: 87px;
    background: #e0e0e0;
    color: #161616;
    font-size: 25px;
    font-weight: 500;
    line-height: 25px;
  }
  td {
    border-bottom: 3px solid #e0e0e0;
  }
  .tick {
    width: 94px;
    padding-left: 28px;
  }
  .id {
    width: 196px;
  }
  .tick button {
    height: 44px;
    width: 55px;
    justify-content: flex-start;
    align-items: flex-start;
    padding-top: 5px;
    border-right: 1px solid #ebebeb;
  }
  .pager {
    flex: none;
    background: #ebebeb;
    border-bottom: 2px solid #dcdcdc;
  }
  .pager-row {
    height: 86px;
    padding-left: 29px;
    display: flex;
    align-items: center;
    border-top: 1px solid #e0e0e0;
  }
  .pick {
    display: flex;
    align-items: center;
    gap: 14px;
    margin-left: 43px;
    color: #161616;
  }
  .pick.page {
    margin-left: 0;
  }
  .range {
    margin-left: 130px;
    padding: 27px 0 27px 30px;
    border-left: 1px solid #dedede;
  }
  .pages {
    margin-left: 50px;
    margin-right: auto;
  }
  .pager-row button {
    width: 80px;
    height: 86px;
    border-left: 1px solid #e0e0e0;
    color: #161616;
  }
  .pager-row button:disabled {
    color: #c6c6c6;
  }
</style>
